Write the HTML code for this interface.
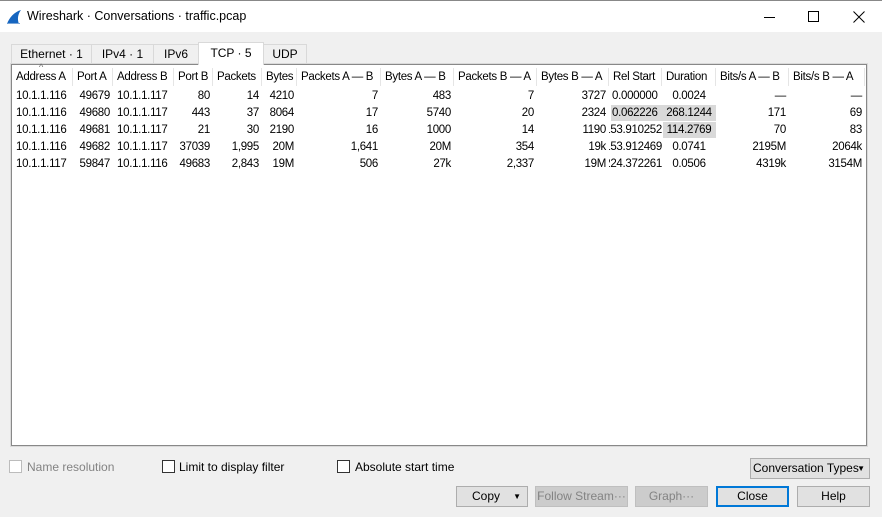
<!DOCTYPE html>
<html><head><meta charset="utf-8"><style>
*{box-sizing:border-box;margin:0;padding:0}
body{width:882px;height:517px;background:#f0f0f0;font-family:"Liberation Sans",sans-serif;font-size:12px;color:#000;position:relative;overflow:hidden}
.abs{position:absolute}
#title{left:0;top:0;width:882px;height:32px;background:#fff;border-top:1px solid #888}
#title .t{left:27px;top:8px;font-size:12.5px}
.tab{position:absolute;top:44px;height:20px;border:1px solid #d9d9d9;border-bottom:none;background:#f0f0f0;text-align:center;line-height:18px;font-size:12px}
#panel{left:10px;top:63px;width:858px;height:384px;border:1px solid #dadada}
#inner{left:11px;top:64px;width:856px;height:382px;border:1px solid #888;background:#fff}
.h,.c{font-size:11.5px;letter-spacing:-0.3px}
.h{position:absolute;top:68px;height:18px;line-height:18px;border-right:1px solid #e5e5e5;white-space:nowrap;overflow:hidden;padding-left:4px}
.c{position:absolute;height:17px;line-height:17px;white-space:nowrap;overflow:hidden}
.r{text-align:right;padding-right:3px}
.cb{position:absolute;width:13px;height:13px;border:1px solid #333;background:#fff}
.btn{position:absolute;top:486px;height:21px;border:1px solid #adadad;background:#e1e1e1;text-align:center;line-height:19px}
.dis{color:#838383;border-color:#bfbfbf;background:#ccc}
</style></head><body>
<div id="title" class="abs">
<svg class="abs" style="left:6px;top:8px" width="17" height="17" viewBox="0 0 17 17"><path d="M1 15 C3 9 8 3 15 1 C12 5 11 10 13 15 Z" fill="#1565c0"/><path d="M1 15 L14 15 L14 14 L2 14Z" fill="#7aa6d8"/></svg>
<div class="abs t">Wireshark · Conversations · traffic.pcap</div>
<div class="abs" style="left:764px;top:16px;width:11px;height:1px;background:#000"></div>
<div class="abs" style="left:808px;top:10px;width:11px;height:11px;border:1px solid #000"></div>
<svg class="abs" style="left:853px;top:10px" width="12" height="12"><path d="M0.5 0.5L11.5 11.5M11.5 0.5L0.5 11.5" stroke="#000" stroke-width="1"/></svg>
</div>
<div class="tab" style="left:11px;width:81px">Ethernet · 1</div>
<div class="tab" style="left:91px;width:63px">IPv4 · 1</div>
<div class="tab" style="left:153px;width:46px">IPv6</div>
<div class="tab" style="left:198px;top:42px;height:23px;width:66px;background:#fff;z-index:3;line-height:20px">TCP · 5</div>
<div class="tab" style="left:263px;width:44px">UDP</div>
<div id="panel" class="abs"></div>
<div id="inner" class="abs"></div>
<div class="abs" style="left:39px;top:62px;font-size:9px;color:#666;z-index:4">^</div>
<div class="h" style="left:12px;width:61px">Address A</div>
<div class="h" style="left:73px;width:40px">Port A</div>
<div class="h" style="left:113px;width:61px">Address B</div>
<div class="h" style="left:174px;width:39px">Port B</div>
<div class="h" style="left:213px;width:49px">Packets</div>
<div class="h" style="left:262px;width:35px">Bytes</div>
<div class="h" style="left:297px;width:84px">Packets A — B</div>
<div class="h" style="left:381px;width:73px">Bytes A — B</div>
<div class="h" style="left:454px;width:83px">Packets B — A</div>
<div class="h" style="left:537px;width:72px">Bytes B — A</div>
<div class="h" style="left:609px;width:53px">Rel Start</div>
<div class="h" style="left:662px;width:54px">Duration</div>
<div class="h" style="left:716px;width:73px">Bits/s A — B</div>
<div class="h" style="left:789px;width:76px">Bits/s B — A</div>
<div class="abs" style="left:611px;top:105px;width:105px;height:16px;background:#d9d9d9"></div>
<div class="abs" style="left:663px;top:122px;width:53px;height:16px;background:#d9d9d9"></div>
<div id="rows"></div>
<script>
var cols=[[12,61,0],[73,40,1],[113,61,0],[174,39,1],[213,49,1],[262,35,1],[297,84,1],[381,73,1],[454,83,1],[537,72,1],[609,53,0],[662,54,0],[716,73,1],[789,76,1]];
var d=[["10.1.1.116","49679","10.1.1.117","80","14","4210","7","483","7","3727","0.000000","0.0024","—","—"],
["10.1.1.116","49680","10.1.1.117","443","37","8064","17","5740","20","2324","0.062226","268.1244","171","69"],
["10.1.1.116","49681","10.1.1.117","21","30","2190","16","1000","14","1190","153.910252","114.2769","70","83"],
["10.1.1.116","49682","10.1.1.117","37039","1,995","20M","1,641","20M","354","19k","153.912469","0.0741","2195M","2064k"],
["10.1.1.117","59847","10.1.1.116","49683","2,843","19M","506","27k","2,337","19M","224.372261","0.0506","4319k","3154M"]];
var h="";
d.forEach(function(r,i){var y=88+i*17;r.forEach(function(v,j){var c=cols[j];var st="left:"+c[0]+"px;top:"+y+"px;width:"+c[1]+"px;";
if(j==10){st+="direction:rtl;text-align:left;padding-left:3px;";if(i<2)st="left:"+c[0]+"px;top:"+y+"px;width:"+c[1]+"px;padding-left:3px;";}
else if(j==11)st+="text-align:center;";
else if(!c[2])st+="padding-left:4px;";
h+='<div class="c'+(c[2]?' r':'')+'" style="'+st+'">'+v+'</div>';});});
document.getElementById("rows").innerHTML=h;
</script>
<div class="cb" style="left:9px;top:460px;border-color:#bcbcbc"></div>
<div class="abs" style="left:27px;top:460px;color:#838383">Name resolution</div>
<div class="cb" style="left:162px;top:460px"></div>
<div class="abs" style="left:179px;top:460px">Limit to display filter</div>
<div class="cb" style="left:337px;top:460px"></div>
<div class="abs" style="left:355px;top:460px">Absolute start time</div>
<div class="btn" style="left:750px;top:458px;width:120px;text-align:left;padding-left:2px">Conversation Types<span style="font-size:8px;position:absolute;right:4px">▼</span></div>
<div class="btn" style="left:456px;width:72px;text-align:left;padding-left:15px">Copy<span style="font-size:8px;position:absolute;right:6px">▼</span></div>
<div class="btn dis" style="left:535px;width:93px">Follow Stream···</div>
<div class="btn dis" style="left:635px;width:73px">Graph···</div>
<div class="btn" style="left:716px;width:73px;border:2px solid #0078d7;line-height:17px">Close</div>
<div class="btn" style="left:797px;width:73px">Help</div>
</body></html>
